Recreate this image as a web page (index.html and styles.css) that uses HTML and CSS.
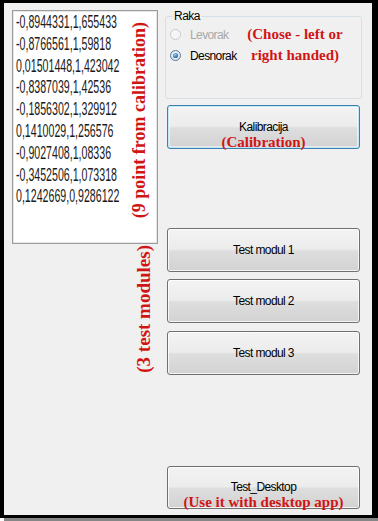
FILE: index.html
```html
<!DOCTYPE html>
<html lang="sr">
<head>
<meta charset="utf-8">
<title>Raka</title>
<link rel="stylesheet" href="styles.css">
</head>
<body>
<div class="frame">
  <div class="main">
    <div class="left">
      <div class="listbox">
        <div class="values">
          <div>-0,8944331,1,655433</div>
          <div>-0,8766561,1,59818</div>
          <div>0,01501448,1,423042</div>
          <div>-0,8387039,1,42536</div>
          <div>-0,1856302,1,329912</div>
          <div>0,1410029,1,256576</div>
          <div>-0,9027408,1,08336</div>
          <div>-0,3452506,1,073318</div>
          <div>0,1242669,0,9286122</div>
        </div>
        <div class="note note-vertical note-points">(9 point from calibration)</div>
      </div>
      <div class="note note-vertical note-modules">(3 test modules)</div>
    </div>
    <div class="right">
      <fieldset class="group">
        <legend class="group-title">Raka</legend>
        <div class="group-body">
          <div class="radios">
            <label class="radio radio-disabled">
              <svg class="radio-mark" width="11" height="11" viewBox="0 0 11 11">
                <circle cx="5.5" cy="5.5" r="5" fill="#f5f5f5" stroke="#c8c8c8"/>
              </svg>
              <span>Levorak</span>
            </label>
            <label class="radio">
              <svg class="radio-mark" width="11" height="11" viewBox="0 0 11 11">
                <defs>
                  <radialGradient id="rg" cx="0.5" cy="0.45" r="0.6">
                    <stop offset="0" stop-color="#ffffff"/>
                    <stop offset="1" stop-color="#d5dde6"/>
                  </radialGradient>
                  <radialGradient id="dot" cx="0.4" cy="0.35" r="0.7">
                    <stop offset="0" stop-color="#8fd0f5"/>
                    <stop offset="1" stop-color="#1c5d9c"/>
                  </radialGradient>
                </defs>
                <circle cx="5.5" cy="5.5" r="5" fill="url(#rg)" stroke="#5a7a96"/>
                <circle cx="5.5" cy="5.5" r="2.6" fill="url(#dot)"/>
              </svg>
              <span>Desnorak</span>
            </label>
          </div>
          <div class="note note-hand">(Chose - left or<br>right handed)</div>
        </div>
      </fieldset>
      <button class="btn btn-default btn-annotated btn-cal">
        <span class="btn-label">Kalibracija</span>
        <span class="note btn-note">(Calibration)</span>
      </button>
      <button class="btn btn-mod1"><span class="btn-label">Test modul 1</span></button>
      <button class="btn btn-mod2"><span class="btn-label">Test modul 2</span></button>
      <button class="btn btn-mod3"><span class="btn-label">Test modul 3</span></button>
      <button class="btn btn-annotated btn-desktop">
        <span class="btn-label">Test_Desktop</span>
        <span class="note btn-note">(Use it with desktop app)</span>
      </button>
    </div>
  </div>
</div>
</body>
</html>
```

FILE: styles.css
```css
html, body {
  margin: 0;
  padding: 0;
  background: #ffffff;
}

body {
  width: 378px;
  height: 521px;
  overflow: hidden;
  font-family: "Liberation Sans", Arial, sans-serif;
}

.frame {
  box-sizing: border-box;
  width: 378px;
  height: 518px;
  border-style: solid;
  border-color: #000000;
  border-width: 3px 6px 3px 4px;
  background: #f0f0f0;
  box-shadow: 4px 3px 0 #868686;
}

.main {
  display: flex;
  height: 100%;
}

/* left column */
.left {
  display: flex;
  flex-direction: column;
  width: 161px;
  box-sizing: border-box;
  padding: 7px 7px 0 8px;
}

.listbox {
  position: relative;
  box-sizing: border-box;
  width: 146px;
  height: 234px;
  border: 1px solid #9c9c9c;
  box-shadow: inset 0 0 0 1px #e6e6e6;
  background: #ffffff;
  padding: 1px 0 0 3px;
  overflow: hidden;
}

.values {
  font-family: "Liberation Sans", Arial, sans-serif;
  font-size: 18px;
  line-height: 21.8px;
  color: #1a1a1a;
  white-space: nowrap;
  transform: scaleX(0.59);
  transform-origin: left top;
}

/* red annotations */
.note {
  font-family: "Liberation Serif", "Times New Roman", serif;
  font-weight: bold;
  color: #d01515;
  white-space: nowrap;
  letter-spacing: 0;
}

.note-vertical {
  writing-mode: vertical-rl;
  transform: rotate(180deg);
}

.note-points {
  position: absolute;
  left: 116px;
  top: 11px;
  font-size: 18px;
  line-height: 20px;
}

.note-modules {
  font-size: 19px;
  line-height: 22px;
  height: max-content;
  margin: 1px 0 0 121px;
  width: 22px;
}

/* right column */
.right {
  display: flex;
  flex-direction: column;
  width: 197px;
  box-sizing: border-box;
  padding: 6px 0 6px 0;
}

.group {
  margin: 0;
  padding: 0 11px 0 4px;
  border: 1px solid #d5dfe5;
  border-radius: 3px;
  min-width: 0;
}

.group-title {
  font-size: 12px;
  line-height: 14px;
  letter-spacing: -0.5px;
  color: #000000;
  padding: 0 2px;
  margin-left: 2px;
}

.group-body {
  display: flex;
  box-sizing: border-box;
  height: 75px;
  padding-top: 1px;
}

.radios {
  display: flex;
  flex-direction: column;
  width: 70px;
}

.radio {
  display: flex;
  align-items: center;
  height: 21px;
  font-size: 12px;
  letter-spacing: -0.6px;
  color: #000000;
}

.radio-disabled {
  color: #a8a8a8;
}

.radio-mark {
  flex: none;
  margin-right: 9px;
}

.note-hand {
  flex: 1;
  text-align: center;
  font-size: 15px;
  line-height: 21px;
}

/* buttons */
.btn {
  box-sizing: border-box;
  width: 193px;
  height: 44px;
  margin: 0 2px;
  padding: 0;
  border: 1px solid #707070;
  border-radius: 3px;
  background: linear-gradient(to bottom, #f3f3f3 0%, #ececec 48%, #dedede 52%, #d2d2d2 100%);
  box-shadow: inset 0 0 0 1px rgba(255, 255, 255, 0.75);
  display: flex;
  flex-direction: column;
  align-items: center;
  justify-content: center;
  font-family: "Liberation Sans", Arial, sans-serif;
  font-size: 12px;
  color: #000000;
  overflow: visible;
}

.btn-label {
  font-size: 12px;
  line-height: 14px;
  letter-spacing: -0.6px;
}

.btn-annotated {
  justify-content: flex-start;
}

.btn-note {
  font-size: 15px;
  line-height: 14px;
  margin-top: 1px;
}

.btn-default {
  border-color: #3c7fb1;
  box-shadow: inset 0 0 0 1px #c4e5f6, inset 0 0 0 2px rgba(255, 255, 255, 0.5);
}

.btn-cal {
  margin-top: 6px;
  padding-top: 14px;
}

.btn-mod1 {
  margin-top: 79px;
}

.btn-mod2 {
  margin-top: 7px;
}

.btn-mod3 {
  margin-top: 8px;
}

.btn-desktop {
  margin-top: auto;
  height: 43px;
  padding-top: 13px;
}
```
